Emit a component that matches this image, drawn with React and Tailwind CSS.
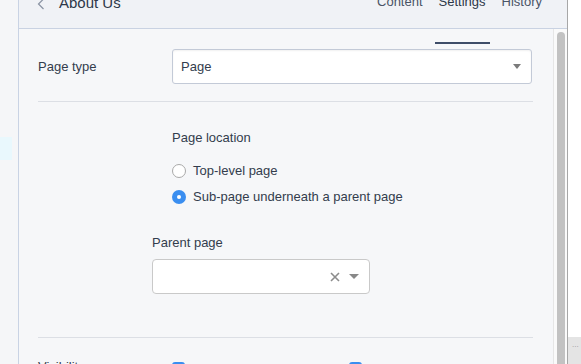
import React from 'react';

const Label = ({ children, className = '' }) => (
  <span className={`text-[13px] leading-4 text-[#333d4d] ${className}`}>{children}</span>
);

const Radio = ({ checked, label }) => (
  <label className="flex h-5 items-center gap-[7px]">
    {checked ? (
      <span className="flex h-[14px] w-[14px] items-center justify-center rounded-full bg-[#3a8ef0]">
        <span className="h-1 w-1 rounded-full bg-white" />
      </span>
    ) : (
      <span className="h-[14px] w-[14px] rounded-full border border-[#a9a9a9] bg-white" />
    )}
    <Label>{label}</Label>
  </label>
);

const Caret = () => (
  <svg width="10" height="5" viewBox="0 0 10 5">
    <path d="M0 0h10L5 5z" fill="#888" />
  </svg>
);

export default function App() {
  return (
    <div className="flex h-[364px] w-[581px] overflow-hidden bg-white font-['Liberation_Sans',Arial,sans-serif]">
      {/* left strip */}
      <div className="relative w-[19px] shrink-0 border-r border-[#c9d3e4] bg-[#f5f6f8]">
        <div className="absolute left-0 top-[137px] h-[23px] w-[12px] bg-[#e9f8fd]" />
      </div>

      {/* main panel */}
      <div className="flex w-[549px] shrink-0 flex-col border-r border-[#a7a7a7]">
        <div className="flex h-[29px] shrink-0 border-b border-[#c9d2e2] bg-[#f0f2f6] pr-[21px]">
          <div className="-mt-[7px] flex h-5 items-center pl-[18px]">
            <svg width="8" height="12" viewBox="0 0 8 12" className="mt-[2px]">
              <path d="M6.5 1L1.5 6l5 5" fill="none" stroke="#8a93a3" strokeWidth="1.2" />
            </svg>
            <span className="ml-[14px] text-[15px] leading-5 text-[#2d3849]">About Us</span>
          </div>
          <div className="ml-auto flex gap-2">
            <div className="-mt-[8.5px] px-1 text-[13px] leading-5 text-[#4a5466]">Content</div>
            <div className="relative -mt-[8.5px] px-1 text-[13px] leading-5 text-[#2d3849]">
              Settings
              <div className="absolute bottom-[-15.5px] left-0 right-0 h-[2px] bg-[#3e4d68]" />
            </div>
            <div className="-mt-[8.5px] px-1 text-[13px] leading-5 text-[#4a5466]">History</div>
          </div>
        </div>

        <div className="flex min-h-0 flex-1">
          {/* scroll content */}
          <div className="w-[534px] overflow-hidden bg-[#f6f7f9] pl-[19px] pr-[20px] pt-5">
            <div className="flex items-center">
              <Label className="w-[134px]">Page type</Label>
              <div className="flex h-[35px] w-[360px] items-center justify-between rounded-[3px] border border-[#c3cad7] bg-white pl-2 pr-[10px] shadow-[inset_0_1px_2px_rgba(0,0,0,0.06)]">
                <Label className="text-[#2c3544]">Page</Label>
                <svg width="8" height="5" viewBox="0 0 8 5">
                  <path d="M0 0h8L4 5z" fill="#7b7b7b" />
                </svg>
              </div>
            </div>

            <div className="mt-[17px] h-px bg-[#dcdfe5]" />

            <div className="ml-[134px] mt-[28px] flex flex-col">
              <Label>Page location</Label>
              <div className="mt-[15px] flex flex-col gap-[6px]">
                <Radio label="Top-level page" />
                <Radio checked label="Sub-page underneath a parent page" />
              </div>
            </div>

            <div className="ml-[114px] mt-[28px] flex flex-col">
              <Label>Parent page</Label>
              <div className="mt-2 flex h-[35px] w-[218px] items-center justify-end gap-[9px] rounded-[4px] border border-[#c9c9c9] bg-white pr-[10px]">
                <svg width="10" height="10" viewBox="0 0 10 10">
                  <path d="M1 1l8 8M9 1l-8 8" stroke="#8c8c8c" strokeWidth="1.6" />
                </svg>
                <Caret />
              </div>
            </div>

            <div className="mt-[43px] h-px bg-[#dcdfe5]" />

            <div className="mt-[21px] flex items-start">
              <Label className="w-[134px]">Visibility</Label>
              <span className="mt-[3px] h-[13px] w-[13px] rounded-[3px] bg-[#3a8ef0]" />
              <span className="ml-[164px] mt-[3px] h-[13px] w-[13px] rounded-[3px] bg-[#3a8ef0]" />
            </div>
          </div>

          {/* scrollbar */}
          <div className="w-[14px] border-l border-[#e6e6e6] bg-[#fafafa] pl-[3px] pt-[3px]">
            <div className="h-[400px] w-2 rounded-full bg-[#c2c2c2]" />
          </div>
        </div>
      </div>

      {/* right edge */}
      <div className="flex flex-1 flex-col justify-end">
        <div className="h-[27px] bg-[#e4e4e4] pl-1 pt-1 text-[8px] leading-none text-[#999]">...</div>
      </div>
    </div>
  );
}
